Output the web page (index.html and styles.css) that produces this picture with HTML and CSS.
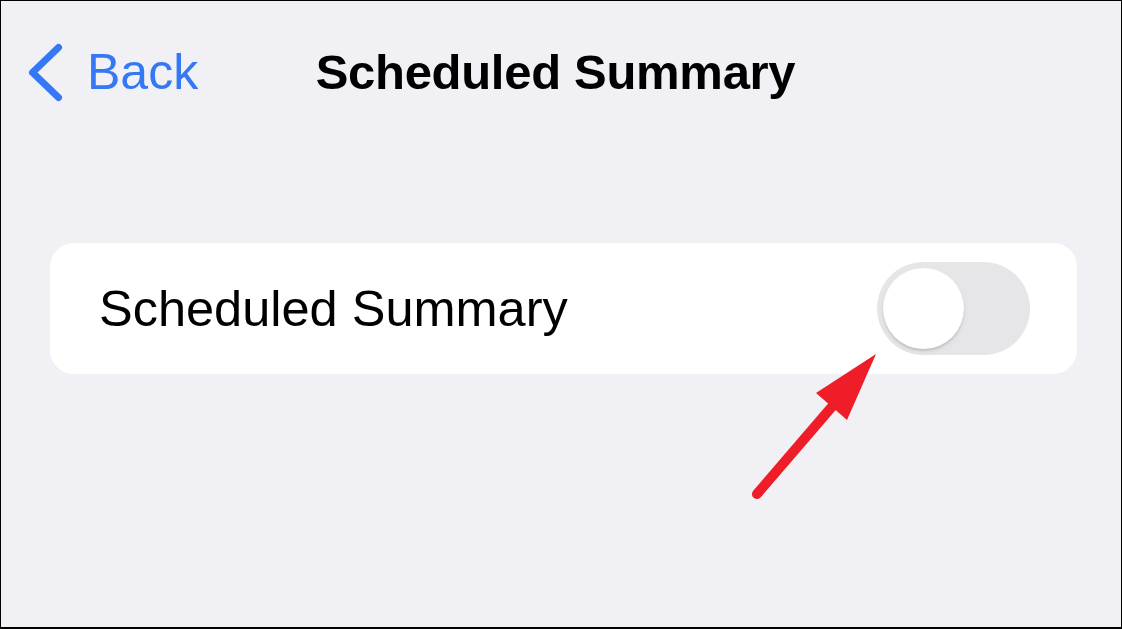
FILE: index.html
```html
<!DOCTYPE html>
<html lang="en">
<head>
<meta charset="utf-8">
<title>Scheduled Summary</title>
<link rel="stylesheet" href="styles.css">
</head>
<body>
<div class="screen">
  <header class="nav">
    <a class="back" href="#">
      <svg class="chevron" width="36" height="60" viewBox="0 0 36 60" aria-hidden="true">
        <polyline points="31.5,5.5 5.5,30.5 31.5,55.5" fill="none" stroke="currentColor" stroke-width="7" stroke-linecap="round" stroke-linejoin="round"/>
      </svg>
      <span>Back</span>
    </a>
    <h1 class="title">Scheduled Summary</h1>
    <span class="spacer"></span>
  </header>

  <section class="group">
    <div class="row">
      <span class="label">Scheduled Summary</span>
      <span class="switch" role="switch" aria-checked="false"><span class="knob"></span></span>
    </div>
  </section>

  <svg class="pointer" width="150" height="170" viewBox="740 340 150 170" aria-hidden="true">
    <line x1="757" y1="494" x2="836" y2="402" stroke="#ee1d27" stroke-width="10" stroke-linecap="round"/>
    <polygon points="876,354 816,393 847,420" fill="#ee1d27"/>
  </svg>
</div>
</body>
</html>
```

FILE: styles.css
```css
html, body {
  margin: 0;
  padding: 0;
}

body {
  font-family: "Liberation Sans", Arial, sans-serif;
  background: #000;
}

.screen {
  position: relative;
  width: 1122px;
  height: 629px;
  box-sizing: border-box;
  border: 1px solid #000;
  border-bottom-width: 2px;
  background: #f1f0f5;
  display: flex;
  flex-direction: column;
  overflow: hidden;
}

/* navigation bar */
.nav {
  display: grid;
  grid-template-columns: 1fr auto 1fr;
  align-items: center;
  padding: 41px 11px 0 0;
  height: 60px;
}

.back {
  display: flex;
  align-items: center;
  gap: 24px;
  margin-left: 26px;
  justify-self: start;
  color: #3478f6;
  text-decoration: none;
  font-size: 50px;
  line-height: 60px;
}

.chevron {
  display: block;
  flex: none;
}

.title {
  margin: 0;
  font-size: 49px;
  line-height: 60px;
  font-weight: 700;
  letter-spacing: -0.3px;
  color: #000;
  white-space: nowrap;
}

/* settings group */
.group {
  margin: 141px 44px 0 49px;
  background: #fff;
  border-radius: 24px;
}

.row {
  display: flex;
  align-items: center;
  justify-content: space-between;
  padding: 19px 47px 19px 49px;
}

.label {
  font-size: 50.5px;
  line-height: 60px;
  color: #000;
  white-space: nowrap;
}

.switch {
  box-sizing: border-box;
  width: 153px;
  height: 93px;
  padding: 6px;
  border-radius: 47px;
  background: #e6e6e8;
  display: flex;
  align-items: center;
}

.knob {
  width: 81px;
  height: 81px;
  border-radius: 50%;
  background: #fff;
  box-shadow: 0 2px 2px rgba(0, 0, 0, 0.12), 0 3px 6px rgba(0, 0, 0, 0.05);
}

/* callout arrow over the switch */
.pointer {
  position: absolute;
  left: 739px;
  top: 339px;
}
```
